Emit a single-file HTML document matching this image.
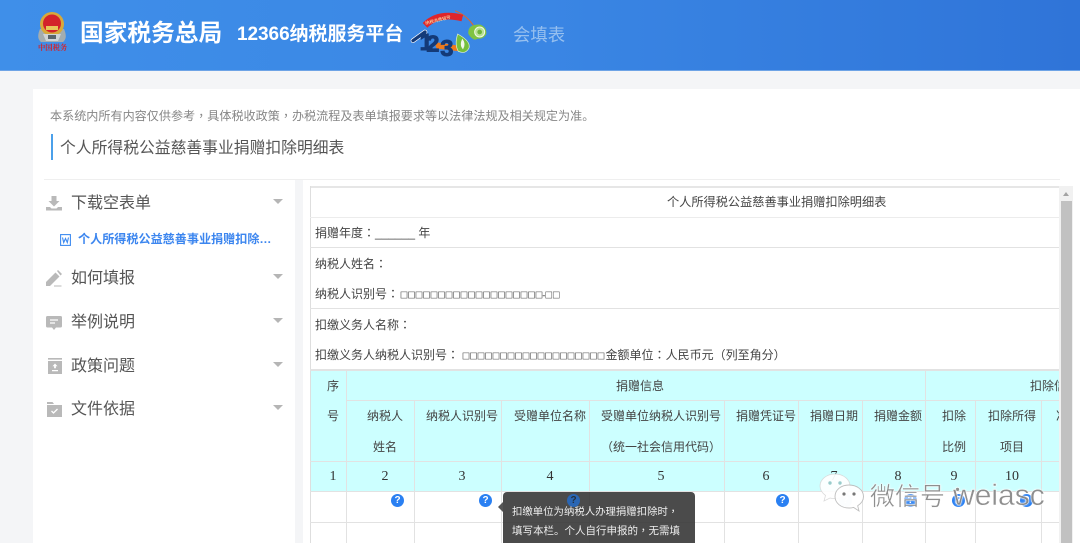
<!DOCTYPE html>
<html lang="zh">
<head>
<meta charset="utf-8">
<title>个人所得税公益慈善事业捐赠扣除明细表</title>
<style>
*{box-sizing:border-box;margin:0;padding:0}
html,body{width:1080px;height:543px;overflow:hidden;background:#f4f5f7}
body{position:relative;font-family:"Liberation Sans","Noto Sans CJK SC",sans-serif;color:#333}
#w{position:absolute;left:0;top:0;width:1080px;height:543px;overflow:hidden;filter:blur(.3px)}
.a{position:absolute}
.t{position:absolute;white-space:nowrap;line-height:20px;height:20px;font-size:12px;color:#444}
.c{transform:translateX(-50%)}
.h{position:absolute;background:#e2e2e2;height:1px}
.v{position:absolute;background:#e2e2e2;width:1px}
.s{font-size:16px;color:#555;left:71px}
.car{position:absolute;left:273px;width:0;height:0;border-left:5px solid transparent;border-right:5px solid transparent;border-top:5px solid #b5b5b5}
.n{font-family:"Liberation Serif",serif;font-size:14px;color:#333}
.q{position:absolute;width:13px;height:13px;border-radius:50%;background:#2a80f2;color:#fff;font-size:10px;font-weight:bold;line-height:13px;text-align:center;top:494px}
.p{font-family:"Noto Sans CJK TC",sans-serif}
.b{font-size:8px;letter-spacing:-.5px;color:#444;font-family:"Noto Sans CJK SC",sans-serif;margin-left:1px;-webkit-text-stroke:.2px #555}
</style>
</head>
<body>
<div id="w">
<!-- header -->
<div class="a" style="left:0;top:0;width:1080px;height:71px;background:linear-gradient(90deg,#3f8fe9 0%,#3a86e4 50%,#2f74d8 100%);border-bottom:1px solid #6ea4e6"></div>
<svg class="a" style="left:36px;top:10px" width="32" height="36" viewBox="0 0 32 36">
<path d="M4 19 Q0 28 5 32 L27 32 Q32 28 28 19 Z" fill="#a3adb0"/>
<circle cx="16" cy="14" r="12" fill="#d8a93a"/>
<circle cx="16" cy="13.500" r="9" fill="#d3232a"/>
<rect x="10" y="16" width="12" height="4" fill="#e8c65a"/>
<path d="M7 24 L25 24 L22 31 L10 31 Z" fill="#cfd4d6"/>
<rect x="12" y="25" width="8" height="4" fill="#59656b"/>
</svg>
<div class="t" style="left:38px;top:38px;font-size:7.300px;font-weight:bold;color:#d3232a;font-family:'Liberation Serif','Noto Serif CJK SC',serif">中国税务</div>
<div class="t" style="left:80px;top:24px;font-size:23.700px;font-weight:bold;color:#fff">国家税务总局</div>
<div class="t" style="left:237px;top:25px;font-size:19px;font-weight:bold;color:#fff;letter-spacing:-.05px">12366纳税服务平台</div>
<svg class="a" style="left:405px;top:8px" width="85" height="50" viewBox="0 0 255 150">
<path d="M150 8 Q185 22 205 52" fill="none" stroke="#e0662a" stroke-width="3"/>
<path d="M60 52 Q100 12 172 30" fill="none" stroke="#e0252a" stroke-width="20"/>
<text x="62" y="50" font-size="13" fill="#ffeeb0" font-family="Noto Sans CJK SC,sans-serif" transform="rotate(-14 62 50)">纳税消费短号</text>
<path d="M88 102 L175 115 L165 130 L95 122 Z" fill="#ee7a1c"/>
<path d="M24 98 L60 72" stroke="#fff" stroke-width="14" stroke-linecap="round"/>
<path d="M24 98 L60 72" stroke="#143a78" stroke-width="10" stroke-linecap="round"/>
<text x="44" y="126" font-size="70" font-weight="bold" fill="#143a78" stroke="#143a78" stroke-width="3" font-family="Liberation Sans,sans-serif">1</text>
<text x="64" y="130" font-size="70" font-weight="bold" fill="#143a78" stroke="#143a78" stroke-width="3" font-family="Liberation Sans,sans-serif">2</text>
<text x="106" y="144" font-size="70" font-weight="bold" fill="#143a78" stroke="#143a78" stroke-width="3" font-family="Liberation Sans,sans-serif">3</text>
<path d="M158 78 Q198 100 192 120 Q182 140 160 130 Q148 110 158 78Z" fill="#76bf3c" stroke="#e4f3d4" stroke-width="2"/>
<path d="M172 92 Q184 108 174 124 Q162 112 172 92Z" fill="#f2f7ea"/>
<path d="M190 78 Q188 58 204 52 Q216 48 226 50 Q246 58 244 78 Q236 94 218 92 Q206 102 190 78Z" fill="#80c341"/>
<circle cx="224" cy="72" r="15" fill="#b9e096" stroke="#f0f9e6" stroke-width="3"/>
<circle cx="224" cy="72" r="7" fill="#6fb53a"/>
</svg>
<div class="t" style="left:513px;top:25px;font-size:17.400px;color:#97c0ef">会填表</div>

<!-- main card -->
<div class="a" style="left:33px;top:89px;width:1047px;height:454px;background:#fff"></div>
<div class="t" style="left:50px;top:106px;font-size:12.100px;color:#868686">本系统内所有内容仅供参考<span class="p" lang="zh-TW">，</span>具体税收政策<span class="p" lang="zh-TW">，</span>办税流程及表单填报要求等以法律法规及相关规定为准。</div>
<div class="a" style="left:51px;top:134px;width:2px;height:26px;background:#4ba0ea"></div>
<div class="t" style="left:60px;top:138px;font-size:15.800px;color:#555;line-height:21px">个人所得税公益慈善事业捐赠扣除明细表</div>
<div class="a" style="left:44px;top:179px;width:1016px;height:1px;background:#efefef"></div>
<div class="a" style="left:295px;top:180px;width:8px;height:363px;background:#f4f5f7"></div>

<!-- sidebar -->
<svg class="a" style="left:46px;top:195px" width="16" height="16" viewBox="0 0 16 16"><path d="M5.500 1h5v5h3L8 11.500 2.500 6h3zM0 12h4l1.500 1.500h5L12 12h4v3.500H0z" fill="#b9b9b9"/></svg>
<div class="t s" style="top:192px;margin-top:2px">下载空表单</div>
<div class="car" style="top:199px"></div>
<svg class="a" style="left:60px;top:234px" width="11" height="12" viewBox="0 0 11 12"><rect x=".6" y=".6" width="9.800" height="10.800" fill="none" stroke="#3d8af0" stroke-width="1.100"/><path d="M2.500 3.500l1.200 5 1.800-4 1.800 4 1.200-5" fill="none" stroke="#3d8af0" stroke-width="1.100"/></svg>
<div class="t" style="left:78px;top:229px;font-size:12.100px;font-weight:bold;color:#3c86ef">个人所得税公益慈善事业捐赠扣除…</div>
<svg class="a" style="left:46px;top:270px" width="16" height="17" viewBox="0 0 16 17"><path d="M0 16v-4L9.500 2.500l4 4L4 16zM11 1l1-1 4 4-1.500 1.500zM8 15.500h7.500V16.500H8z" fill="#b9b9b9"/></svg>
<div class="t s" style="top:269px">如何填报</div>
<div class="car" style="top:274px"></div>
<svg class="a" style="left:46px;top:316px" width="16" height="14" viewBox="0 0 16 14"><path d="M1.500 0h13A1.500 1.500 0 0 1 16 1.500v8.500a1.500 1.500 0 0 1-1.500 1.500H10L8 14l-2-2.500H1.500A1.500 1.500 0 0 1 0 10V1.500A1.500 1.500 0 0 1 1.500 0z" fill="#b9b9b9"/><path d="M4 4h8M4 7h5" stroke="#fff" stroke-width="1.200"/></svg>
<div class="t s" style="top:313px">举例说明</div>
<div class="car" style="top:318px"></div>
<svg class="a" style="left:48px;top:358px" width="14" height="16" viewBox="0 0 14 16"><path d="M0 0h14v1.600H0zM0 3h14v13H0z" fill="#b9b9b9"/><path d="M7 5.500l2.500 2.800h-1.600v2H6.100v-2H4.500zM4 12h6v1.200H4z" fill="#fff"/></svg>
<div class="t s" style="top:357px">政策问题</div>
<div class="car" style="top:362px"></div>
<svg class="a" style="left:47px;top:402px" width="15" height="15" viewBox="0 0 15 15"><path d="M0 0h5.500l1.500 2H0zM0 3h15v12H0z" fill="#b9b9b9"/><path d="M4.500 9l2 2 4-4" stroke="#fff" stroke-width="1.300" fill="none"/></svg>
<div class="t s" style="top:400px">文件依据</div>
<div class="car" style="top:405px"></div>

<!-- table -->
<div class="a" style="left:310px;top:370px;width:749px;height:122px;background:#ccffff"></div>
<div class="a" style="left:310px;top:186px;width:749px;height:357px;overflow:hidden">
  <div class="a" style="left:0;top:0;width:749px;height:2px;background:#e6e6e6"></div>
  <div class="a" style="left:0;top:0;width:1px;height:357px;background:#dedede"></div>
</div>
<div class="h" style="left:310px;top:217px;width:749px;background:#ececec"></div>
<div class="h" style="left:310px;top:247px;width:749px"></div>
<div class="h" style="left:310px;top:308px;width:749px"></div>
<div class="h" style="left:310px;top:369px;width:749px;height:2px"></div>
<div class="h" style="left:347px;top:400px;width:712px"></div>
<div class="h" style="left:310px;top:461px;width:749px"></div>
<div class="h" style="left:310px;top:491px;width:749px"></div>
<div class="h" style="left:310px;top:522px;width:749px"></div>
<div class="v" style="left:346px;top:370px;height:173px"></div>
<div class="v" style="left:414px;top:400px;height:143px"></div>
<div class="v" style="left:501px;top:400px;height:143px"></div>
<div class="v" style="left:589px;top:400px;height:143px"></div>
<div class="v" style="left:724px;top:400px;height:143px"></div>
<div class="v" style="left:798px;top:400px;height:143px"></div>
<div class="v" style="left:862px;top:400px;height:143px"></div>
<div class="v" style="left:925px;top:370px;height:173px"></div>
<div class="v" style="left:975px;top:400px;height:143px"></div>
<div class="v" style="left:1041px;top:400px;height:143px"></div>

<div class="t" style="left:667px;top:192px;font-size:12.200px">个人所得税公益慈善事业捐赠扣除明细表</div>
<div class="t" style="left:315px;top:223px">捐赠年度<span class="p" lang="zh-TW">：</span>______ 年</div>
<div class="t" style="left:315px;top:254px">纳税人姓名<span class="p" lang="zh-TW">：</span></div>
<div class="t" style="left:315px;top:284px">纳税人识别号<span class="p" lang="zh-TW">：</span><span class="b">□□□□□□□□□□□□□□□□□□□-□□</span></div>
<div class="t" style="left:315px;top:315px">扣缴义务人名称<span class="p" lang="zh-TW">：</span></div>
<div class="t" style="left:315px;top:345px">扣缴义务人纳税人识别号<span class="p" lang="zh-TW">：</span><span class="b" style="margin-left:3px">□□□□□□□□□□□□□□□□□□□</span><span style="margin-left:1px">金额单位</span><span class="p" lang="zh-TW">：</span>人民币元<span class="p" lang="zh-TW">（</span>列至角分<span class="p" lang="zh-TW">）</span></div>

<div class="t c" style="left:333px;top:376px">序</div>
<div class="t c" style="left:333px;top:406px">号</div>
<div class="t c" style="left:640px;top:376px">捐赠信息</div>
<div class="t" style="left:1030px;top:376px;width:29px;overflow:hidden">扣除信息</div>
<div class="t c" style="left:385px;top:406px">纳税人</div>
<div class="t c" style="left:385px;top:437px">姓名</div>
<div class="t c" style="left:462px;top:406px">纳税人识别号</div>
<div class="t c" style="left:550px;top:406px">受赠单位名称</div>
<div class="t c" style="left:661px;top:406px">受赠单位纳税人识别号</div>
<div class="t c" style="left:661px;top:437px"><span class="p" lang="zh-TW">（</span>统一社会信用代码<span class="p" lang="zh-TW">）</span></div>
<div class="t c" style="left:766px;top:406px">捐赠凭证号</div>
<div class="t c" style="left:834px;top:406px">捐赠日期</div>
<div class="t c" style="left:898px;top:406px">捐赠金额</div>
<div class="t c" style="left:954px;top:406px">扣除</div>
<div class="t c" style="left:954px;top:437px">比例</div>
<div class="t c" style="left:1012px;top:406px">扣除所得</div>
<div class="t c" style="left:1012px;top:437px">项目</div>
<div class="t" style="left:1056px;top:406px;width:3px;overflow:hidden">准予</div>

<div class="t c n" style="left:333px;top:467px">1</div>
<div class="t c n" style="left:385px;top:467px">2</div>
<div class="t c n" style="left:462px;top:467px">3</div>
<div class="t c n" style="left:550px;top:467px">4</div>
<div class="t c n" style="left:661px;top:467px">5</div>
<div class="t c n" style="left:766px;top:467px">6</div>
<div class="t c n" style="left:834px;top:467px">7</div>
<div class="t c n" style="left:898px;top:467px">8</div>
<div class="t c n" style="left:954px;top:467px">9</div>
<div class="t c n" style="left:1012px;top:467px">10</div>

<div class="q" style="left:391px">?</div>
<div class="q" style="left:479px">?</div>
<div class="q" style="left:776px">?</div>
<div class="q" style="left:839px;opacity:.25">?</div>
<div class="q" style="left:904px">?</div>
<div class="q" style="left:952px">?</div>
<div class="q" style="left:1020px">?</div>

<!-- scrollbar -->
<div class="a" style="left:1059px;top:186px;width:14px;height:357px;background:#f1f1f1"></div>
<div class="a" style="left:1061px;top:201px;width:11px;height:342px;background:#c1c1c1"></div>
<div class="a" style="left:1063px;top:192px;width:0;height:0;border-left:3px solid transparent;border-right:3px solid transparent;border-bottom:4px solid #a3a3a3"></div>
<div class="a" style="left:1073px;top:186px;width:7px;height:357px;background:#fff"></div>

<!-- tooltip -->
<div class="a" style="left:503px;top:492px;width:192px;height:60px;background:rgba(55,55,55,.9);border-radius:4px"></div>
<div class="a" style="left:498px;top:502px;width:0;height:0;border-top:5px solid transparent;border-bottom:5px solid transparent;border-right:5px solid #555"></div>
<div class="q" style="left:567px;background:#2a66b4;color:#26303c">?</div>
<div class="t" style="left:512px;top:501px;font-size:10.400px;color:#eee">扣缴单位为纳税人办理捐赠扣除时<span class="p" lang="zh-TW">，</span></div>
<div class="t" style="left:512px;top:521px;font-size:10.500px;color:#eee">填写本栏。个人自行申报的<span class="p" lang="zh-TW">，</span>无需填</div>

<!-- watermark -->
<svg class="a" style="left:819px;top:473px" width="46" height="40" viewBox="0 0 46 40">
<path d="M16 1C7.500 1 1 6.500 1 13c0 4 2.200 7 5.500 9.500L5 28l6-3c1.500.4 3 .6 5 .6 8.500 0 15-5.500 15-12.600C31 6.500 24.500 1 16 1z" fill="#fff" stroke="#d8d8d8" stroke-width=".8" opacity=".92"/>
<circle cx="11" cy="10" r="1.700" fill="#9cc"/><circle cx="21" cy="10" r="1.700" fill="#9cc"/>
<path d="M30 12c-8 0-14 5-14 11.500S22 35 30 35c1.500 0 3-.2 4.500-.6L40 38l-1.300-5.200c3.400-2.200 5.800-5.400 5.800-9.300C44.500 17 38 12 30 12z" fill="#fff" stroke="#bbb" stroke-width=".9" opacity=".94"/>
<circle cx="25" cy="21" r="1.600" fill="#777"/><circle cx="35" cy="21" r="1.600" fill="#777"/>
</svg>
<div class="t" style="left:870px;top:485px;font-size:25px;color:#8a8a8a;-webkit-text-stroke:.4px #fff;text-shadow:0 0 2px #fff;opacity:.95">微信号<span class="p" lang="zh-TW">：</span><span style="margin-left:-17px;font-size:30px;font-family:'Liberation Sans',sans-serif">weiasc</span></div>
</div>
</body>
</html>
